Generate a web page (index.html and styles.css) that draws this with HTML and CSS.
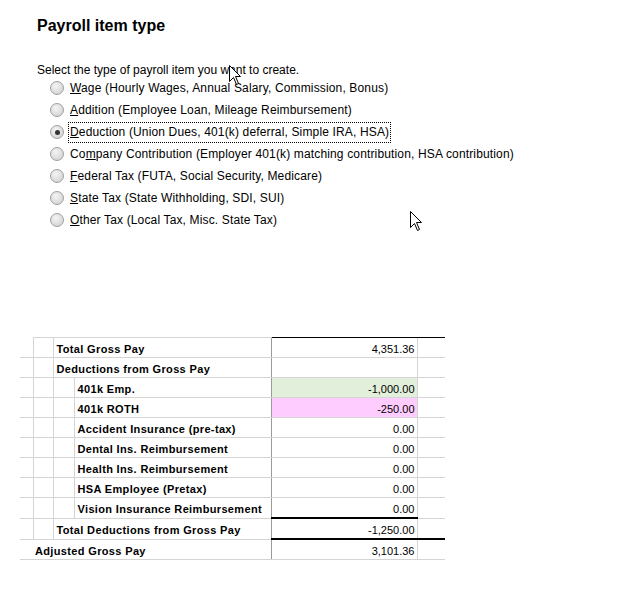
FILE: index.html
```html
<!DOCTYPE html>
<html lang="en">
<head>
    <meta charset="UTF-8">
    <title>Payroll item type</title>
    <link rel="stylesheet" href="styles.css">
</head>
<body>
    <!-- Dialogo: tipo de partida -->
    <div class="dialog">
        <h1 class="title">Payroll item type</h1>
        <p class="prompt">Select the type of payroll item you want to create.</p>
        <ul class="options">
            <li class="option"><span class="radio"></span><span class="label"><u>W</u>age (Hourly Wages, Annual Salary, Commission, Bonus)</span></li>
            <li class="option"><span class="radio"></span><span class="label"><u>A</u>ddition (Employee Loan, Mileage Reimbursement)</span></li>
            <li class="option"><span class="radio checked"></span><span class="label focused"><u>D</u>eduction (Union Dues, 401(k) deferral, Simple IRA, HSA)</span></li>
            <li class="option"><span class="radio"></span><span class="label">Co<u>m</u>pany Contribution (Employer 401(k) matching contribution, HSA contribution)</span></li>
            <li class="option"><span class="radio"></span><span class="label"><u>F</u>ederal Tax (FUTA, Social Security, Medicare)</span></li>
            <li class="option"><span class="radio"></span><span class="label"><u>S</u>tate Tax (State Withholding, SDI, SUI)</span></li>
            <li class="option"><span class="radio"></span><span class="label"><u>O</u>ther Tax (Local Tax, Misc. State Tax)</span></li>
        </ul>
    </div>

    <!-- Hoja de calculo -->
    <table class="sheet">
        <colgroup>
            <col class="w-a"><col class="w-b"><col class="w-c"><col class="w-d"><col class="w-e"><col class="w-f">
        </colgroup>
        <tr class="first">
            <td class="gap"></td><td class="gap vl"></td><td class="lbl vl" colspan="2">Total Gross Pay</td><td class="num">4,351.36</td><td class="end"></td>
        </tr>
        <tr>
            <td class="gap"></td><td class="gap vl"></td><td class="lbl vl" colspan="2">Deductions from Gross Pay</td><td class="num"></td><td class="end"></td>
        </tr>
        <tr>
            <td class="gap"></td><td class="gap vl"></td><td class="gap vl"></td><td class="lbl vl">401k Emp.</td><td class="num green">-1,000.00</td><td class="end"></td>
        </tr>
        <tr>
            <td class="gap"></td><td class="gap vl"></td><td class="gap vl"></td><td class="lbl vl">401k ROTH</td><td class="num pink">-250.00</td><td class="end"></td>
        </tr>
        <tr>
            <td class="gap"></td><td class="gap vl"></td><td class="gap vl"></td><td class="lbl vl">Accident Insurance (pre-tax)</td><td class="num">0.00</td><td class="end"></td>
        </tr>
        <tr>
            <td class="gap"></td><td class="gap vl"></td><td class="gap vl"></td><td class="lbl vl">Dental Ins. Reimbursement</td><td class="num">0.00</td><td class="end"></td>
        </tr>
        <tr>
            <td class="gap"></td><td class="gap vl"></td><td class="gap vl"></td><td class="lbl vl">Health Ins. Reimbursement</td><td class="num">0.00</td><td class="end"></td>
        </tr>
        <tr>
            <td class="gap"></td><td class="gap vl"></td><td class="gap vl"></td><td class="lbl vl">HSA Employee (Pretax)</td><td class="num">0.00</td><td class="end"></td>
        </tr>
        <tr>
            <td class="gap"></td><td class="gap vl"></td><td class="gap vl"></td><td class="lbl vl">Vision Insurance Reimbursement</td><td class="num sum-above">0.00</td><td class="end"></td>
        </tr>
        <tr>
            <td class="gap"></td><td class="gap vl"></td><td class="lbl vl" colspan="2">Total Deductions from Gross Pay</td><td class="num sum-below">-1,250.00</td><td class="end sum-below"></td>
        </tr>
        <tr>
            <td class="lbl outer" colspan="4">Adjusted Gross Pay</td><td class="num">3,101.36</td><td class="end"></td>
        </tr>
    </table>

    <!-- Punteros del raton -->
    <svg class="cursor cursor-1" width="13" height="21" viewBox="0 0 13 21"><path d="M0.5 0.5 L0.5 16.5 L4.5 12.5 L7.5 19.5 L9.5 18.5 L6.5 11.5 L11.5 11.5 Z" fill="#fff" stroke="#000" stroke-width="1"/></svg>
    <svg class="cursor cursor-2" width="13" height="21" viewBox="0 0 13 21"><path d="M0.5 0.5 L0.5 16.5 L4.5 12.5 L7.5 19.5 L9.5 18.5 L6.5 11.5 L11.5 11.5 Z" fill="#fff" stroke="#000" stroke-width="1"/></svg>
</body>
</html>
```

FILE: styles.css
```css
/* Estilos generales */
body {
    font-family: "Liberation Sans", Arial, sans-serif;
    margin: 0;
    padding: 0;
    background-color: white;
    color: #000;
    position: relative;
}

/* Dialogo */
.dialog {
    padding-left: 37px;
}

.title {
    font-size: 16px;
    font-weight: bold;
    line-height: 18px;
    margin: 17px 0 0 0;
}

.prompt {
    font-size: 12px;
    line-height: 14px;
    margin: 28px 0 0 0;
}

.options {
    list-style: none;
    margin: 0;
    padding: 0 0 0 13px;
    font-size: 12px;
    letter-spacing: 0.15px;
}

.option {
    display: flex;
    align-items: center;
    height: 22px;
    gap: 6px;
}

.radio {
    width: 12px;
    height: 12px;
    border: 1px solid #a0a0a0;
    border-radius: 50%;
    background: radial-gradient(circle at 40% 35%, #f4f4f4 0%, #d8d8d8 70%, #c8c8c8 100%);
    position: relative;
    flex: none;
}

.radio.checked::after {
    content: "";
    position: absolute;
    left: 3.5px;
    top: 3.5px;
    width: 5px;
    height: 5px;
    border-radius: 50%;
    background: #333;
}

.label {
    line-height: 17px;
    display: inline-block;
}

.label.focused {
    outline: 1px dotted #000;
    outline-offset: 1px;
}

/* Hoja de calculo */
.sheet {
    margin: 106px 0 0 20px;
    border-collapse: collapse;
    table-layout: fixed;
    width: 425px;
    font-size: 11px;
}

.w-a { width: 13px; }
.w-b { width: 20px; }
.w-c { width: 21px; }
.w-d { width: 197px; }
.w-e { width: 146px; }
.w-f { width: 28px; }

.sheet td {
    height: 16px;
    padding: 3px 3px 0 3px;
    border-bottom: 1px solid #d4d4d4;
    white-space: nowrap;
    overflow: hidden;
    line-height: 16px;
}

.sheet td.gap {
    padding: 3px 0 0 0;
}

.sheet .vl {
    border-left: 1px solid #d4d4d4;
}

.sheet .lbl {
    font-weight: bold;
    letter-spacing: 0.35px;
}

.sheet .outer {
    padding-left: 15px;
}

.sheet .num {
    text-align: right;
    padding-right: 2px;
    border-left: 1px solid #9a9a9a;
}

.sheet .end {
    border-left: 1px solid #d4d4d4;
    padding: 3px 0 0 0;
}

.sheet .first .vl,
.sheet .first .lbl {
    border-top: 1px solid #d4d4d4;
}

.sheet .first .num,
.sheet .first .end {
    border-top: 1px solid #000;
}

.sheet .green {
    background-color: #e2efda;
}

.sheet .pink {
    background-color: #ffccff;
}

.sheet .sum-above,
.sheet .sum-below {
    border-bottom: 2px solid #000;
}

/* Punteros */
.cursor {
    position: absolute;
}

.cursor-1 {
    left: 229px;
    top: 65px;
}

.cursor-2 {
    left: 410px;
    top: 211px;
}
```
